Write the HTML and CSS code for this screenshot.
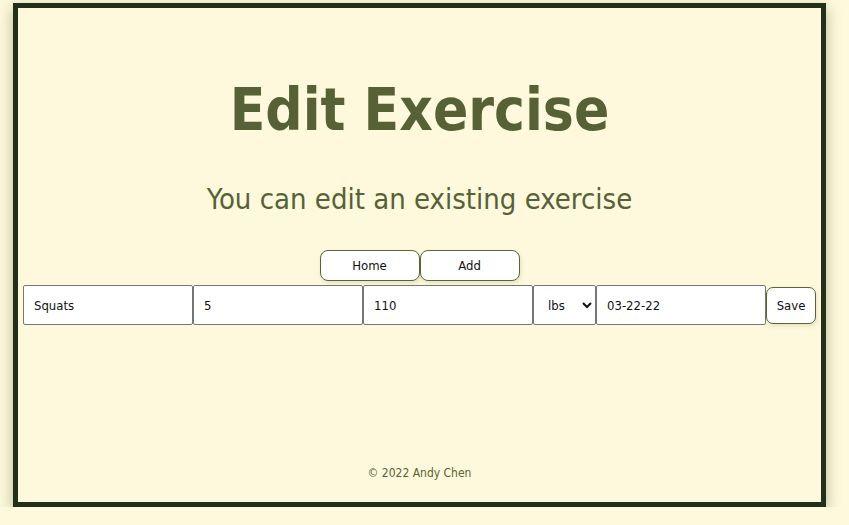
FILE: index.html
```html
<!DOCTYPE html>
<html lang="en">
<head>
<meta charset="utf-8">
<title>Edit Exercise</title>
<link rel="stylesheet" href="styles.css">
</head>
<body>
<div class="app">
  <header class="header">
    <h1 class="title">Edit Exercise</h1>
    <p class="subtitle">You can edit an existing exercise</p>
  </header>
  <nav class="nav">
    <button class="nav-btn">Home</button>
    <button class="nav-btn">Add</button>
  </nav>
  <main class="main">
    <form class="edit-row">
      <input class="field" type="text" value="Squats">
      <input class="field" type="text" value="5">
      <input class="field" type="text" value="110">
      <select class="unit">
        <option>lbs</option>
        <option>kgs</option>
      </select>
      <input class="field" type="text" value="03-22-22">
      <button class="save-btn" type="button">Save</button>
    </form>
  </main>
  <footer class="footer">© 2022 Andy Chen</footer>
</div>
</body>
</html>
```

FILE: styles.css
```css
html, body {
  margin: 0;
  padding: 0;
  background: #fdf9dc;
}

body {
  padding: 3px 23px 0 13px;
  font-family: "DejaVu Sans Condensed", "DejaVu Sans", sans-serif;
  color: #566236;
}

.app {
  width: 803px;
  height: 494px;
  border: 5px solid #22301a;
  background: #fef9dc;
  box-shadow: 0 5px 14px rgba(60, 60, 20, 0.35);
  display: flex;
  flex-direction: column;
  align-items: center;
}

.header {
  display: flex;
  flex-direction: column;
  align-items: center;
}

.title {
  margin: 66px 0 0;
  font-size: 58px;
  line-height: 72px;
  font-weight: bold;
  color: #566236;
}

.subtitle {
  margin: 35px 0 0;
  font-size: 29px;
  line-height: 36px;
  color: #566236;
}

.nav {
  margin-top: 33px;
  display: flex;
}

.nav-btn {
  width: 100px;
  height: 31px;
  background: #fff;
  border: 1px solid #5a6535;
  border-radius: 8px;
  font-family: "DejaVu Sans Condensed", "DejaVu Sans", sans-serif;
  font-size: 13px;
  color: #111;
  box-shadow: 1px 2px 4px rgba(80, 80, 30, 0.15);
}

.main {
  margin-top: 4px;
}

.edit-row {
  display: flex;
  align-items: center;
  margin: 0;
}

.field {
  box-sizing: border-box;
  width: 170px;
  height: 40px;
  padding: 0 10px;
  border: 1px solid #767676;
  border-radius: 2px;
  background: #fff;
  font-family: "DejaVu Sans Condensed", "DejaVu Sans", sans-serif;
  font-size: 13px;
  color: #111;
}

.unit {
  box-sizing: border-box;
  width: 63px;
  height: 40px;
  padding: 0 4px 0 10px;
  border: 1px solid #767676;
  border-radius: 2px;
  background: #fff;
  font-family: "DejaVu Sans Condensed", "DejaVu Sans", sans-serif;
  font-size: 13px;
  color: #111;
}

.save-btn {
  box-sizing: border-box;
  width: 50px;
  height: 37px;
  background: #fff;
  border: 1px solid #5a6535;
  border-radius: 7px;
  font-family: "DejaVu Sans Condensed", "DejaVu Sans", sans-serif;
  font-size: 13px;
  color: #111;
  padding: 0;
  box-shadow: 1px 2px 4px rgba(80, 80, 30, 0.15);
}

.footer {
  margin-top: auto;
  margin-bottom: 22px;
  font-size: 12px;
  color: #566236;
}
```
